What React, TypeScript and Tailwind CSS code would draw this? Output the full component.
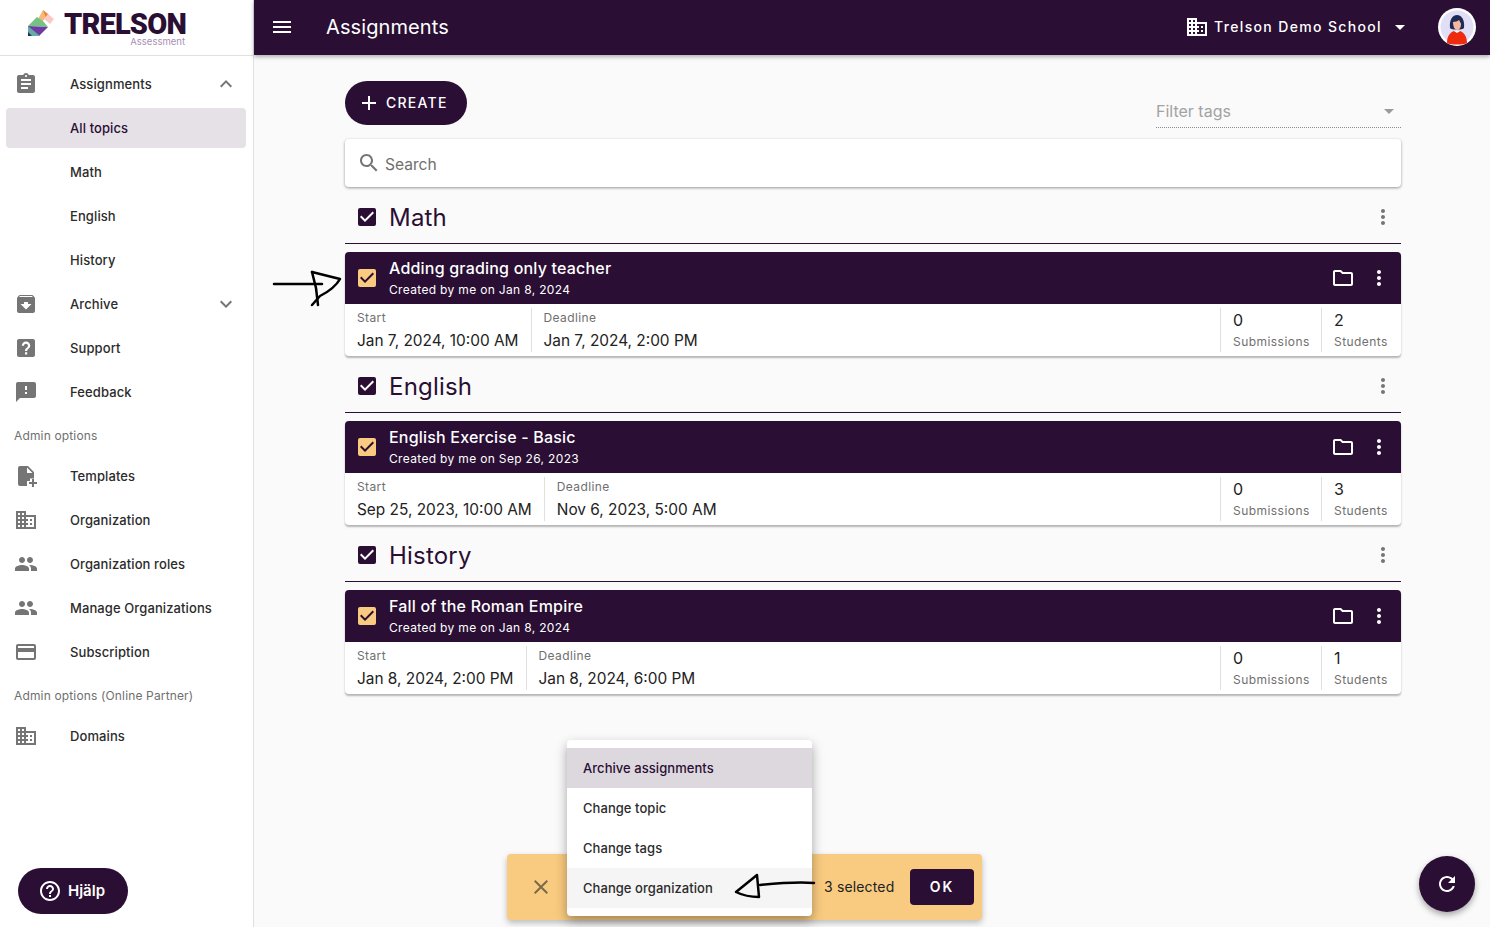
import type { ReactNode } from "react";

const paths = {
  assignment: "M19 3h-4.18C14.4 1.84 13.3 1 12 1c-1.3 0-2.4.84-2.82 2H5c-1.1 0-2 .9-2 2v14c0 1.1.9 2 2 2h14c1.1 0 2-.9 2-2V5c0-1.1-.9-2-2-2zm-7 0c.55 0 1 .45 1 1s-.45 1-1 1-1-.45-1-1 .45-1 1-1zm2 14H7v-2h7v2zm3-4H7v-2h10v2zm0-4H7V7h10v2z",
  archive: "M20.54 5.23l-1.39-1.68C18.88 3.21 18.47 3 18 3H6c-.47 0-.88.21-1.16.55L3.46 5.23C3.17 5.57 3 6.02 3 6.5V19c0 1.1.9 2 2 2h14c1.1 0 2-.9 2-2V6.5c0-.48-.17-.93-.46-1.27zM12 17.5L6.5 12H10v-2h4v2h3.5L12 17.5zM5.12 5l.81-1h12l.94 1H5.12z",
  helpBox: "M19 3H5c-1.1 0-2 .9-2 2v14c0 1.1.9 2 2 2h14c1.1 0 2-.9 2-2V5c0-1.1-.9-2-2-2zM11 18.5h2.2v-2.2H11v2.2zM12 5.5c-2.3 0-4.2 1.9-4.2 4.2H10c0-1.1.9-2 2-2s2 .9 2 2c0 2-3 1.9-3 5.4h2.2c0-2.4 3-2.7 3-5.4 0-2.3-1.9-4.2-4.2-4.2z",
  feedback: "M20 2H4c-1.1 0-1.99.9-1.99 2L2 22l4-4h14c1.1 0 2-.9 2-2V4c0-1.1-.9-2-2-2zm-7 12h-2v-2h2v2zm0-4h-2V6h2v4z",
  template: "M14 2H6c-1.1 0-2 .9-2 2v16c0 1.1.9 2 2 2h7v-5h3v-2.5h4V8l-6-6zm-1 7V3.5L18.5 9H13zM18 15h2v3h3v2h-3v3h-2v-3h-3v-2h3v-3z",
  domain: "M12 7V3H2v18h20V7H12zM6 19H4v-2h2v2zm0-4H4v-2h2v2zm0-4H4V9h2v2zm0-4H4V5h2v2zm4 12H8v-2h2v2zm0-4H8v-2h2v2zm0-4H8V9h2v2zm0-4H8V5h2v2zm10 12h-8v-2h2v-2h-2v-2h2v-2h-2V9h8v10zm-2-8h-2v2h2v-2zm0 4h-2v2h2v-2z",
  people: "M16 11c1.66 0 2.99-1.34 2.99-3S17.66 5 16 5c-1.66 0-3 1.34-3 3s1.34 3 3 3zm-8 0c1.66 0 2.99-1.34 2.99-3S9.66 5 8 5C6.34 5 5 6.34 5 8s1.34 3 3 3zm0 2c-2.33 0-7 1.17-7 3.5V19h14v-2.5c0-2.33-4.67-3.5-7-3.5zm8 0c-.29 0-.62.02-.97.05 1.16.84 1.97 1.97 1.97 3.45V19h6v-2.5c0-2.33-4.67-3.5-7-3.5z",
  card: "M20 4H4c-1.11 0-1.99.89-1.99 2L2 18c0 1.11.89 2 2 2h16c1.11 0 2-.89 2-2V6c0-1.11-.89-2-2-2zm0 14H4v-6h16v6zm0-10H4V6h16v2z",
  menu: "M3 18h18v-2H3v2zm0-5h18v-2H3v2zm0-7v2h18V6H3z",
  search: "M15.5 14h-.79l-.28-.27C15.41 12.59 16 11.11 16 9.5 16 5.91 13.09 3 9.5 3S3 5.91 3 9.5 5.91 16 9.5 16c1.61 0 3.09-.59 4.23-1.57l.27.28v.79l5 4.99L20.49 19l-4.99-5zm-6 0C7.01 14 5 11.99 5 9.5S7.01 5 9.5 5 14 7.01 14 9.5 11.99 14 9.5 14z",
  folder: "M9.17 6l2 2H20v10H4V6h5.17M10 4H4c-1.1 0-1.99.9-1.99 2L2 18c0 1.1.9 2 2 2h16c1.1 0 2-.9 2-2V8c0-1.1-.9-2-2-2h-8l-2-2z",
  more: "M12 8c1.1 0 2-.9 2-2s-.9-2-2-2-2 .9-2 2 .9 2 2 2zm0 2c-1.1 0-2 .9-2 2s.9 2 2 2 2-.9 2-2-.9-2-2-2zm0 6c-1.1 0-2 .9-2 2s.9 2 2 2 2-.9 2-2-.9-2-2-2z",
  helpOutline: "M11 18h2v-2h-2v2zm1-16C6.48 2 2 6.48 2 12s4.48 10 10 10 10-4.48 10-10S17.52 2 12 2zm0 18c-4.41 0-8-3.59-8-8s3.59-8 8-8 8 3.59 8 8-3.59 8-8 8zm0-14c-2.21 0-4 1.79-4 4h2c0-1.1.9-2 2-2s2 .9 2 2c0 2-3 1.75-3 5h2c0-2.25 3-2.5 3-5 0-2.21-1.79-4-4-4z",
  refresh: "M17.65 6.35C16.2 4.9 14.21 4 12 4c-4.42 0-7.99 3.58-7.99 8s3.57 8 7.99 8c3.73 0 6.84-2.55 7.73-6h-2.08c-.82 2.33-3.04 4-5.65 4-3.31 0-6-2.69-6-6s2.69-6 6-6c1.66 0 3.14.69 4.22 1.78L13 11h7V4l-2.35 2.35z",
  close: "M19 6.41L17.59 5 12 10.59 6.41 5 5 6.41 10.59 12 5 17.59 6.41 19 12 13.41 17.59 19 19 17.59 13.41 12z",
  plus: "M19 13h-6v6h-2v-6H5v-2h6V5h2v6h6v2z",
  caret: "M7 10l5 5 5-5z",
  up: "M7.41 15.41L12 10.83l4.59 4.58L18 14l-6-6-6 6z",
  down: "M7.41 8.59L12 13.17l4.59-4.58L18 10l-6 6-6-6z",
};

function Icon({ d, className }: { d: string; className?: string }) {
  return (
    <svg viewBox="0 0 24 24" fill="currentColor" className={className}>
      <path d={d} fillRule="evenodd" />
    </svg>
  );
}

function Check({ box, tick }: { box: string; tick: string }) {
  return (
    <svg viewBox="0 0 24 24" className="w-6 h-6 shrink-0">
      <rect x="3" y="3" width="18" height="18" rx="2" fill={box} />
      <path d="M10 17l-5-5 1.41-1.41L10 14.17l7.59-7.59L19 8l-9 9z" fill={tick} />
    </svg>
  );
}

function NavRow({ d, label, chevron }: { d: string; label: string; chevron?: string }) {
  return (
    <div className="h-11 flex items-center pl-[14px] pr-[15px]">
      <Icon d={d} className="w-6 h-6 text-[#757575] shrink-0" />
      <span className="ml-8 pt-0.5 flex-1 text-[13px] font-medium tracking-[0.1px] text-[#2b2b2b]">{label}</span>
      {chevron && <Icon d={chevron} className="w-6 h-6 text-[#757575]" />}
    </div>
  );
}

function SubRow({ label, active }: { label: string; active?: boolean }) {
  return (
    <div className="h-11 py-0.5 pl-1.5 pr-[7px]">
      <div className={`h-10 flex items-center pl-16 pt-0.5 rounded text-[13px] font-medium tracking-[0.1px] ${active ? "bg-[#e5e1e7] text-[#2a0e34]" : "text-[#2b2b2b]"}`}>
        {label}
      </div>
    </div>
  );
}

function NavLabel({ children }: { children: ReactNode }) {
  return <div className="h-10 flex items-center pl-3.5 pt-1 text-xs tracking-[0.15px] text-[#6f6f6f]">{children}</div>;
}

function Stat({ value, label, width }: { value: string; label: string; width: string }) {
  return (
    <div className={`${width} my-1 border-l border-[#e0e0e0] pl-3 flex flex-col justify-center`}>
      <div className="text-base leading-5 text-[#222]">{value}</div>
      <div className="text-xs leading-4 mt-1 tracking-[0.45px] text-[#6f6f6f]">{label}</div>
    </div>
  );
}

function DateCol({ label, value, className }: { label: string; value: string; className: string }) {
  return (
    <div className={`my-1 pl-3 pt-0.5 flex flex-col justify-center ${className}`}>
      <div className="text-xs leading-4 -mt-0.5 tracking-[0.4px] text-[#6f6f6f]">{label}</div>
      <div className="text-[15.4px] leading-5 mt-[5px] text-[#222]">{value}</div>
    </div>
  );
}

function Section({ topic, title, created, start, deadline, students }: {
  topic: string;
  title: string;
  created: string;
  start: string;
  deadline: string;
  students: string;
}) {
  return (
    <section className="h-[169px]">
      <div className="h-[57px] flex items-center pl-2.5 pr-1.5 pt-[3px] border-b border-[#2a0e34]">
        <Check box="#2a0e34" tick="#ffffff" />
        <h2 className="ml-2.5 flex-1 pt-0.5 text-2xl text-[#2a0e34] tracking-[0.2px]">{topic}</h2>
        <Icon d={paths.more} className="w-6 h-6 text-[#757575]" />
      </div>
      <div className="mt-2 h-[104px] bg-white rounded shadow-[0_2px_2px_rgba(0,0,0,0.28)]">
        <div className="h-[52px] bg-[#2a0e34] rounded-t flex items-center pl-2.5 pr-2.5 text-white">
          <Check box="#f9cb80" tick="#2a0e34" />
          <div className="ml-2.5 flex-1 pt-0.5">
            <div className="text-base font-medium leading-5 tracking-[0.2px] -mt-0.5">{title}</div>
            <div className="text-xs leading-4 mt-1 tracking-[0.33px]">{created}</div>
          </div>
          <Icon d={paths.folder} className="w-6 h-6 mr-[12px]" />
          <Icon d={paths.more} className="w-6 h-6" />
        </div>
        <div className="h-[52px] flex">
          <DateCol label="Start" value={start} className="pr-3" />
          <DateCol label="Deadline" value={deadline} className="flex-1 border-l border-[#e0e0e0]" />
          <Stat value="0" label="Submissions" width="w-[101px]" />
          <Stat value={students} label="Students" width="w-20" />
        </div>
      </div>
    </section>
  );
}

function Logo() {
  return (
    <svg viewBox="0 0 28 28" className="w-[28px] h-[28px] shrink-0">
      <polygon points="11,10 16,1 21,5 16,12" fill="#f7b977" />
      <polygon points="16,1 22,6 19,9" fill="#e9843c" />
      <polygon points="21,5 27,10 23,15 17,10" fill="#fbc9c3" />
      <polygon points="10,8 16,12 21,18 1,17" fill="#75c384" />
      <polygon points="1,17 21,18 12,27 1,27" fill="#6f3ba3" />
      <polygon points="1,17 13,27 1,27" fill="#66aba6" />
      <polygon points="1,23 5,27 1,27" fill="#22304a" />
    </svg>
  );
}

function Avatar() {
  return (
    <svg viewBox="0 0 38 38" className="w-[38px] h-[38px]">
      <circle cx="19" cy="19" r="19" fill="#ffffff" />
      <circle cx="19" cy="19" r="16.5" fill="#e0dff5" />
      <path d="M12 20c-1-9 3-13 7-13s8 4 7 13c-1 2-13 2-14 0z" fill="#1f2a55" />
      <path d="M15 14c2 0 5-1 6-2 1 2 2 3 2 4 0 4-2 6-4 6s-4-3-4-8z" fill="#f5b8a0" />
      <path d="M9 35c0-8 4-11 7-12 2 1 4 1 6 0 3 1 7 4 7 12-4 2-16 2-20 0z" fill="#ee2b0f" />
      <path d="M16 23h6l-3 2z" fill="#ffffff" />
    </svg>
  );
}

export default function App() {
  return (
    <div className="relative h-[927px] w-[1490px] overflow-hidden flex bg-[#fafafa] [font-family:Inter,'Noto_Sans',sans-serif]">
      {/* Sidebar */}
      <aside className="w-[254px] shrink-0 bg-white border-r border-[#e0e0e0] flex flex-col">
        <div className="h-[56px] border-b border-[#e0e0e0] pl-[27px] pt-[9px] flex">
          <Logo />
          <div className="ml-2 w-[123px] flex flex-col items-end pt-[3px]">
            <div className="[font-family:Roboto,sans-serif] font-black text-[29px] leading-[24px] tracking-[-0.8px] text-[#2a0e34]">TRELSON</div>
            <div className="text-[9.5px] leading-[10px] mt-[1px] mr-[1px] text-[#a98fb5]">Assessment</div>
          </div>
        </div>
        <nav className="pt-1.5">
          <NavRow d={paths.assignment} label="Assignments" chevron={paths.up} />
          <SubRow label="All topics" active />
          <SubRow label="Math" />
          <SubRow label="English" />
          <SubRow label="History" />
          <NavRow d={paths.archive} label="Archive" chevron={paths.down} />
          <NavRow d={paths.helpBox} label="Support" />
          <NavRow d={paths.feedback} label="Feedback" />
          <NavLabel>Admin options</NavLabel>
          <NavRow d={paths.template} label="Templates" />
          <NavRow d={paths.domain} label="Organization" />
          <NavRow d={paths.people} label="Organization roles" />
          <NavRow d={paths.people} label="Manage Organizations" />
          <NavRow d={paths.card} label="Subscription" />
          <NavLabel>Admin options (Online Partner)</NavLabel>
          <NavRow d={paths.domain} label="Domains" />
        </nav>
        <div className="mt-auto mb-[13px] ml-[18px] w-[110px] h-[46px] rounded-full bg-[#2a0e34] text-white flex items-center pl-5 gap-1.5">
          <Icon d={paths.helpOutline} className="w-6 h-6" />
          <span className="text-[15px] font-semibold">Hjälp</span>
        </div>
      </aside>

      <div className="flex-1 flex flex-col min-w-0">
        {/* Top bar */}
        <header className="relative h-[55px] shrink-0 bg-[#2a0e34] text-white flex items-center pl-4 pr-[14px] shadow-[0_2px_4px_rgba(0,0,0,0.3)]">
          <Icon d={paths.menu} className="w-6 h-6 -mt-0.5" />
          <h1 className="ml-[32px] pb-0.5 flex-1 text-xl tracking-[0.1px]">Assignments</h1>
          <Icon d={paths.domain} className="w-6 h-6 -mt-0.5" />
          <span className="ml-[5px] pb-0.5 text-sm font-medium tracking-[1.35px]">Trelson Demo School</span>
          <Icon d={paths.caret} className="w-6 h-6 ml-1.5 -mt-0.5" />
          <div className="ml-[26px] -mt-[1px]">
            <Avatar />
          </div>
        </header>

        {/* Content */}
        <main className="pl-[91px] w-[1147px]">
          <div className="h-[84px] flex items-start justify-between">
            <div className="mt-[26px] w-[122px] h-11 rounded-full bg-[#2a0e34] text-white flex items-center pl-[12px] gap-[5px]">
              <Icon d={paths.plus} className="w-6 h-6" />
              <span className="text-sm font-medium tracking-[1.25px]">CREATE</span>
            </div>
            <div className="mt-[42px] w-[245px] h-[31px] border-b border-dotted border-[#8a8a8a] flex items-center justify-between pb-0.5">
              <span className="text-base text-[#a2a2a2]">Filter tags</span>
              <Icon d={paths.caret} className="w-6 h-6 text-[#9a9a9a]" />
            </div>
          </div>
          <div className="h-12 bg-white rounded shadow-[0_1px_3px_rgba(0,0,0,0.4)] flex items-center pl-3 gap-1">
            <Icon d={paths.search} className="w-6 h-6 text-[#757575]" />
            <span className="text-[15.6px] pt-1 text-[#6f6f6f]">Search</span>
          </div>
          <Section topic="Math" title="Adding grading only teacher" created="Created by me on Jan 8, 2024" start="Jan 7, 2024, 10:00 AM" deadline="Jan 7, 2024, 2:00 PM" students="2" />
          <Section topic="English" title="English Exercise - Basic" created="Created by me on Sep 26, 2023" start="Sep 25, 2023, 10:00 AM" deadline="Nov 6, 2023, 5:00 AM" students="3" />
          <Section topic="History" title="Fall of the Roman Empire" created="Created by me on Jan 8, 2024" start="Jan 8, 2024, 2:00 PM" deadline="Jan 8, 2024, 6:00 PM" students="1" />
        </main>
      </div>

      {/* Selection bar */}
      <div className="absolute left-[507px] top-[854px] w-[475px] h-[66px] bg-[#f9cb80] rounded shadow-[0_3px_6px_rgba(0,0,0,0.25)] flex items-center">
        <Icon d={paths.close} className="w-6 h-6 ml-[22px] text-[#7a6a4a]" />
        <span className="ml-[271px] text-sm text-[#222] tracking-[0.15px]">3 selected</span>
        <div className="ml-auto mr-2 w-16 h-9 rounded bg-[#2a0e34] text-white text-sm font-semibold tracking-[2px] flex items-center justify-center">OK</div>
      </div>

      {/* Actions menu */}
      <div className="absolute left-[567px] top-[740px] w-[245px] py-2 bg-white rounded shadow-[0_5px_12px_rgba(0,0,0,0.35)] text-[13px] font-medium tracking-[0.05px] text-[#2b2b2b]">
        <div className="h-10 flex items-center pl-4 pt-0.5 bg-[#ddd8de] text-[#2a0e34]">Archive assignments</div>
        <div className="h-10 flex items-center pl-4 pt-0.5">Change topic</div>
        <div className="h-10 flex items-center pl-4 pt-0.5">Change tags</div>
        <div className="h-10 flex items-center pl-4 pt-0.5 bg-[#f5f5f5]">Change organization</div>
      </div>

      {/* Refresh button */}
      <div className="absolute left-[1419px] top-[856px] w-14 h-14 rounded-full bg-[#2a0e34] text-white flex items-center justify-center shadow-[0_3px_6px_rgba(0,0,0,0.35)]">
        <Icon d={paths.refresh} className="w-6 h-6" />
      </div>

      {/* Hand-drawn annotations */}
      <svg className="absolute left-0 top-0 w-[1490px] h-[927px] pointer-events-none" viewBox="0 0 1490 927" fill="none" stroke="#000" strokeWidth="2.5" strokeLinecap="round" strokeLinejoin="round">
        <path d="M274 284H322" />
        <path d="M312 272L340 279C336 286 328 292 320 296L312 305" />
        <path d="M312 272L316 288L318 305" />
        <path d="M814 883C800 882 780 883 760 885" />
        <path d="M757 875L736 892C742 895 750 897 759 897L757 875Z" />
      </svg>
    </div>
  );
}
